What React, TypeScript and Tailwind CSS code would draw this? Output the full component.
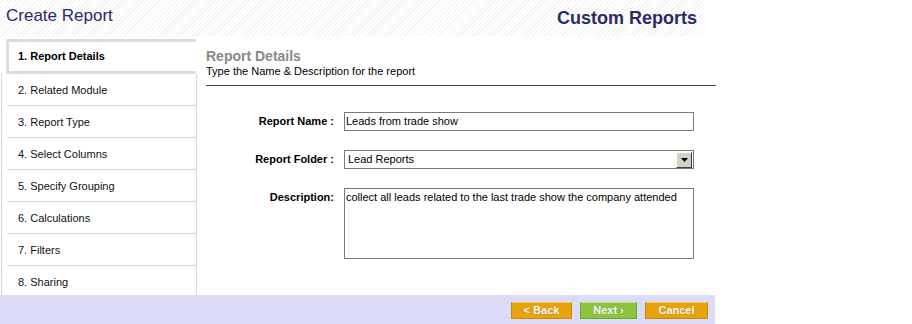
import React from "react";

const steps = [
  "2. Related Module",
  "3. Report Type",
  "4. Select Columns",
  "5. Specify Grouping",
  "6. Calculations",
  "7. Filters",
  "8. Sharing",
];

export default function App() {
  return (
    <div className="w-[912px] h-[324px] bg-white overflow-hidden text-[11px] text-black font-['Liberation_Sans',Arial,sans-serif]">
      {/* header strip */}
      <div className="w-[703px] h-[36px] flex items-start justify-between bg-[repeating-linear-gradient(135deg,#ffffff_0px,#ffffff_2px,#f1f1f1_2px,#f1f1f1_3px)]">
        <div className="pl-[6px] pt-[6px] text-[17px] leading-[20px] text-[#2b2a66]">Create Report</div>
        <div className="pr-[6px] pt-[8px] text-[18px] leading-[20px] font-bold text-[#2b2a66]">Custom Reports</div>
      </div>

      <div className="flex mt-[3px] h-[256px] overflow-hidden">
        {/* wizard steps */}
        <div className="w-[196px] shrink-0">
          <div className="ml-[6px] w-[190px] h-[35px] border-[3px] border-r-0 border-[#dcdcdc] pl-[9px] flex items-center font-bold">
            1. Report Details
          </div>
          <div className="ml-px border-l border-[#d4d4d4] pl-[5px]">
            {steps.map((s) => (
              <div key={s} className="w-[190px] h-[32px] border-b border-r border-[#d8d8d8] pl-[11px] pt-[2px] flex items-center text-[#111]">
                {s}
              </div>
            ))}
          </div>
        </div>

        {/* form */}
        <div className="ml-[10px] w-[510px]">
          <div className="pt-[9px] pb-[7px] border-b border-[#444]">
            <div className="h-[16px] leading-[16px] text-[14px] font-bold text-[#8a8a8a]">Report Details</div>
            <div className="h-[14px] leading-[14px]">Type the Name &amp; Description for the report</div>
          </div>

          <div className="mt-[26px] flex items-center">
            <div className="w-[128px] text-right font-bold">Report Name :</div>
            <div className="ml-[10px] w-[350px] h-[19px] border border-[#7a7a7a] pl-[1px] flex items-center">
              Leads from trade show
            </div>
          </div>

          <div className="mt-[19px] flex items-center">
            <div className="w-[128px] text-right font-bold">Report Folder :</div>
            <div className="ml-[10px] w-[350px] h-[19px] border border-[#7a7a7a] pl-[3px] flex items-center justify-between">
              <span>Lead Reports</span>
              <span className="w-[16px] h-[16px] mr-px bg-[#d4d0c8] border border-t-white border-l-white border-b-[#404040] border-r-[#404040] flex items-center justify-center">
                <svg width="7" height="4" viewBox="0 0 7 4">
                  <path d="M0 0h7L3.5 4z" fill="#000" />
                </svg>
              </span>
            </div>
          </div>

          <div className="mt-[19px] flex items-start">
            <div className="w-[128px] text-right font-bold pt-px">Description:</div>
            <div className="ml-[10px] w-[350px] h-[71px] border border-[#7a7a7a] pl-px pt-px leading-[14px]">
              collect all leads related to the last trade show the company attended
            </div>
          </div>
        </div>
      </div>

      {/* footer buttons */}
      <div className="w-[715px] h-[29px] bg-[#dcdcf8] flex justify-end items-start pt-[7px] pr-[7px] gap-[8px]">
        <button className="w-[61px] h-[17px] bg-[#e8a20c] border border-[#c98a05] border-t-[#f6cf63] text-white font-bold leading-[15px] [text-shadow:0_0_1px_#a06a00]">
          &lt; Back
        </button>
        <button className="w-[57px] h-[17px] bg-[#8cc43f] border border-[#6ea52a] border-t-[#c2e38b] text-white font-bold leading-[15px] [text-shadow:0_0_1px_#5b8a1e]">
          Next ›
        </button>
        <button className="w-[63px] h-[17px] bg-[#e8a20c] border border-[#c98a05] border-t-[#f6cf63] text-white font-bold leading-[15px] [text-shadow:0_0_1px_#a06a00]">
          Cancel
        </button>
      </div>
    </div>
  );
}
